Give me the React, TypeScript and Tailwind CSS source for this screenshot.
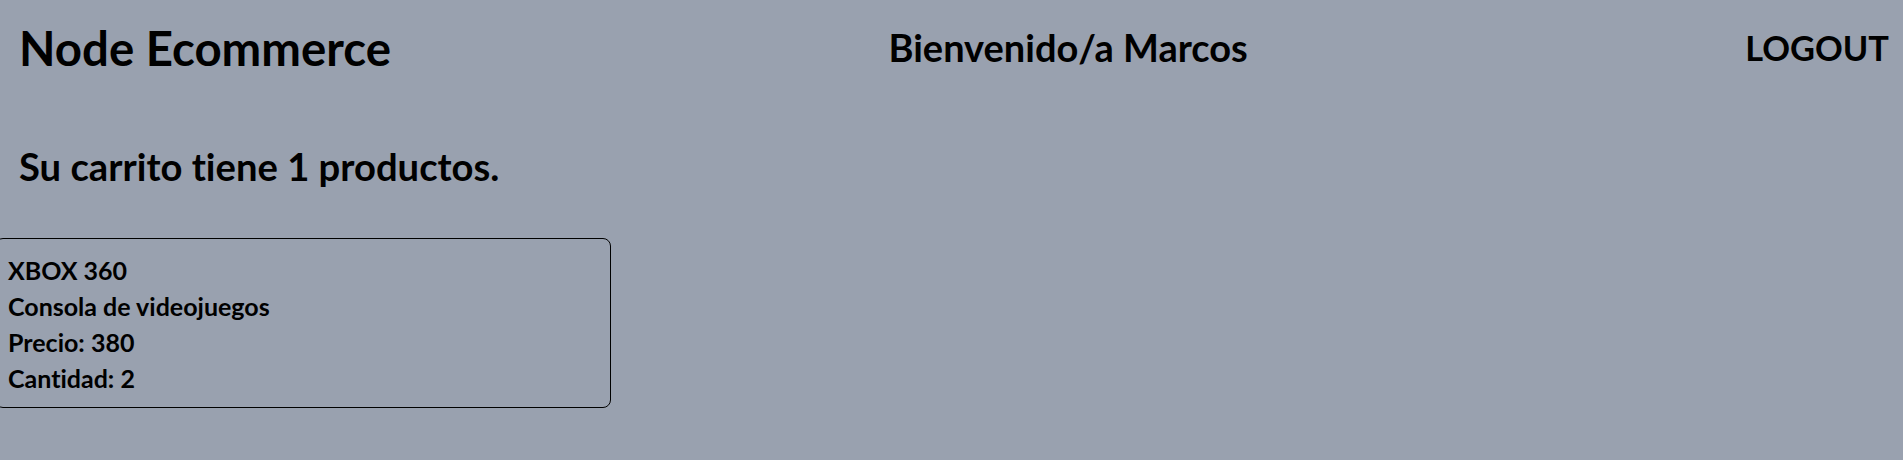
import React from "react";

const producto = {
  nombre: "XBOX 360",
  descripcion: "Consola de videojuegos",
  precio: 380,
  cantidad: 2,
};

const App = () => {
  return (
    <div className="min-h-screen bg-gray-400 text-black font-['Lato',sans-serif] font-bold [font-variant-ligatures:none]">
      {/* Header */}
      <header className="flex h-[95px] items-center justify-between pl-[19px] pr-[14px]">
        <h1 className="text-[47.4px] leading-[57px]">Node Ecommerce</h1>
        <h2 className="text-[38px] leading-[45px]">Bienvenido/a Marcos</h2>
        <button className="text-[34.4px] leading-[43px] font-bold">LOGOUT</button>
      </header>

      {/* Cart summary */}
      <h2 className="mt-[49px] px-[19px] text-[38.2px] leading-[45px]">
        Su carrito tiene 1 productos.
      </h2>

      {/* Product card */}
      <div className="-ml-[5px] mt-[49px] w-[616px] rounded-lg border border-black px-3 pt-[13px] pb-[11px] text-[25px] leading-[36px]">
        <p>{producto.nombre}</p>
        <p>{producto.descripcion}</p>
        <p>Precio: {producto.precio}</p>
        <p>Cantidad: {producto.cantidad}</p>
      </div>
    </div>
  );
};

export default App;
